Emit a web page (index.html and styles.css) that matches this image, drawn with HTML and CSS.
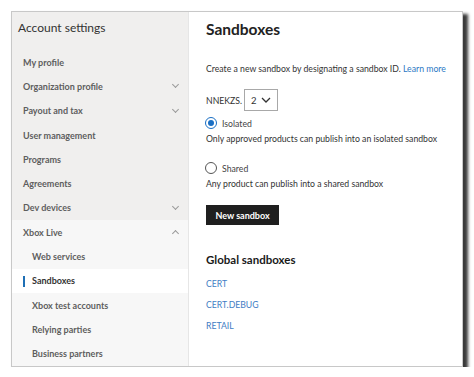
FILE: index.html
```html
<!DOCTYPE html>
<html>
<head>
<meta charset="utf-8">
<link rel="stylesheet" href="styles.css">
</head>
<body>
<div class="frame">
  <nav class="side">
    <div class="side-title">Account settings</div>
    <ul class="menu">
      <li class="item">My profile</li>
      <li class="item">Organization profile <span class="chev down"></span></li>
      <li class="item">Payout and tax <span class="chev down"></span></li>
      <li class="item">User management</li>
      <li class="item">Programs</li>
      <li class="item">Agreements</li>
      <li class="item">Dev devices <span class="chev down"></span></li>
      <li class="group">
        <div class="item open">Xbox Live <span class="chev up"></span></div>
        <ul class="sub">
          <li class="item subitem">Web services</li>
          <li class="item subitem active">Sandboxes</li>
          <li class="item subitem">Xbox test accounts</li>
          <li class="item subitem">Relying parties</li>
          <li class="item subitem">Business partners</li>
        </ul>
      </li>
    </ul>
  </nav>
  <main class="main">
    <h1 class="title">Sandboxes</h1>
    <p class="intro">Create a new sandbox by designating a sandbox ID. <a class="link">Learn more</a></p>
    <div class="idrow">
      <span class="prefix">NNEKZS.</span>
      <div class="select"><span>2</span><svg width="10" height="6" viewBox="0 0 10 6"><path d="M1 1 L5 5 L9 1" fill="none" stroke="#333" stroke-width="1.3"/></svg></div>
    </div>
    <label class="radio"><span class="dot checked"></span>Isolated</label>
    <p class="desc">Only approved products can publish into an isolated sandbox</p>
    <label class="radio shared"><span class="dot"></span>Shared</label>
    <p class="desc">Any product can publish into a shared sandbox</p>
    <button class="btn">New sandbox</button>
    <h2 class="subtitle">Global sandboxes</h2>
    <ul class="globals">
      <li><a class="glink">CERT</a></li>
      <li><a class="glink">CERT.DEBUG</a></li>
      <li><a class="glink">RETAIL</a></li>
    </ul>
  </main>
</div>
</body>
</html>
```
FILE: styles.css
```css
* { box-sizing: border-box; }
html, body { margin: 0; padding: 0; background: #fff; }
body { font-family: Lato, "Open Sans", sans-serif; color: #222; }
.frame {
  margin: 11px 0 0 11px;
  width: 452px;
  height: 356px;
  border: 1px solid #c8c8c8;
  box-shadow: 4px 4px 3px 1px #3a3a3a;
  display: flex;
  overflow: hidden;
  background: #fff;
}
.side {
  width: 177px;
  background: #f0efee;
  flex: none;
  border-right: 1px solid #e6e6e6;
}
.side-title {
  font-size: 12px;
  color: #333;
  padding: 8px 0 0 6px;
  height: 38px;
  white-space: nowrap;
}
.menu, .sub { list-style: none; margin: 0; padding: 0; }
.item {
  height: 24.3px;
  display: flex;
  align-items: center;
  padding-left: 11px;
  padding-right: 10px;
  font-size: 9px;
  font-weight: 700;
  color: #5e5e5e;
  position: relative;
  white-space: nowrap;
}
.group { background: #f7f7f7; }
.subitem { padding-left: 20px; }
.active { background: #fff; color: #333; }
.active::before {
  content: "";
  position: absolute;
  left: 11px;
  top: 7px;
  width: 2px;
  height: 11px;
  background: #1f6fb5;
}
.chev {
  margin-left: auto;
  width: 5px;
  height: 5px;
  border-right: 1px solid #9a9a9a;
  border-bottom: 1px solid #9a9a9a;
}
.chev.down { transform: rotate(45deg); margin-top: -3px; }
.chev.up { transform: rotate(-135deg); margin-top: 3px; }
.main {
  flex: 1;
  padding: 5px 0 0 17px;
  white-space: nowrap;
}
.title {
  margin: 0;
  font-size: 15.5px;
  font-weight: 700;
  color: #222;
  line-height: 24px;
}
.intro {
  margin: 21px 0 0;
  font-size: 8.7px;
  color: #333;
  line-height: 14px;
}
.link { color: #2b78c5; }
.idrow {
  display: flex;
  align-items: center;
  margin-top: 13px;
  font-size: 8.7px;
  color: #333;
}
.select {
  margin-left: 2px;
  width: 34px;
  height: 22px;
  border: 1px solid #a8a8a8;
  display: flex;
  align-items: center;
  justify-content: space-between;
  padding: 0 6px 0 6px;
  font-size: 9.5px;
}
.radio {
  display: flex;
  align-items: center;
  font-size: 8.7px;
  color: #444;
  margin-top: 5px;
  height: 14px;
  margin-left: -1px;
}
.radio.shared { margin-top: 16px; }
.dot {
  width: 12px;
  height: 12px;
  border-radius: 50%;
  border: 1px solid #555;
  margin-right: 5px;
  position: relative;
  background: #fff;
}
.dot.checked { border-color: #1a6fc4; }
.dot.checked::after {
  content: "";
  position: absolute;
  left: 2px;
  top: 2px;
  width: 6px;
  height: 6px;
  border-radius: 50%;
  background: #1a6fc4;
}
.desc {
  margin: 3px 0 0;
  font-size: 8.7px;
  color: #333;
  line-height: 12px;
}
.btn {
  display: block;
  margin-top: 15px;
  width: 73px;
  height: 20px;
  background: #1f1f1f;
  color: #fff;
  border: none;
  font-family: inherit;
  font-size: 9px;
  font-weight: 700;
  padding: 0;
}
.subtitle {
  margin: 27px 0 0;
  font-size: 11.5px;
  font-weight: 700;
  color: #1a1a1a;
  line-height: 16px;
}
.globals { list-style: none; margin: 5px 0 0; padding: 0; }
.globals li { height: 21px; display: flex; align-items: center; }
.glink { font-size: 8.7px; color: #3f7dc4; }
```
